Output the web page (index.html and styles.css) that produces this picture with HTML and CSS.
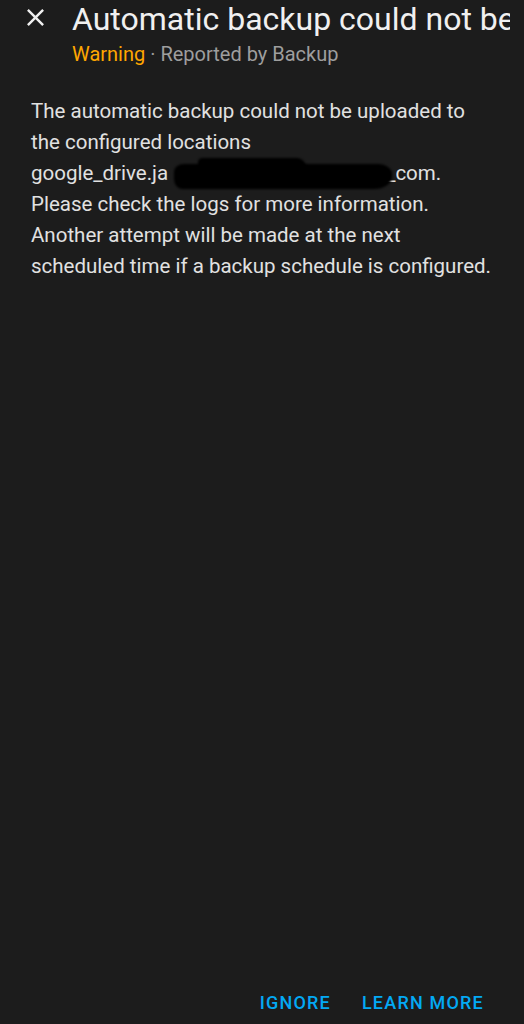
FILE: index.html
```html
<!DOCTYPE html>
<html>

<head>
    <meta http-equiv="Content-Type" content="text/html; charset=utf-8">
    <title>Repair - Automatic backup</title>
    <link rel="stylesheet" href="styles.css">
</head>

<body>
    <div class="dialog">
        <div class="header">
            <button class="close" aria-label="Close">
                <svg viewBox="0 0 24 24" width="29" height="29">
                    <path d="M19 6.41 17.59 5 12 10.59 6.41 5 5 6.41 10.59 12 5 17.59 6.41 19 12 13.41 17.59 19 19 17.59 13.41 12z" fill="currentColor"/>
                </svg>
            </button>
            <div class="heading">
                <h2 class="title">Automatic backup could not be uploaded to the configured locations</h2>
                <div class="subtitle"><span class="severity">Warning</span> · Reported by Backup</div>
            </div>
        </div>

        <div class="content">
            <p>
                The automatic backup could not be uploaded to the configured locations
                <span class="location">google_drive.ja<span class="redacted"><span class="scribble"></span><span class="scribble top"></span></span>_com.</span>
                Please check the logs for more information. Another attempt will be made at the next scheduled time if a backup schedule is configured.
            </p>
        </div>

        <div class="actions">
            <button class="action">Ignore</button>
            <button class="action">Learn more</button>
        </div>
    </div>
</body>
</html>
```

FILE: styles.css
```css
body {
    margin: 0;
    background: #1c1c1c;
    color: #e1e1e1;
    font-family: Roboto, "Noto Sans", sans-serif;
}

.dialog {
    display: flex;
    flex-direction: column;
    min-height: 100vh;
}

.header {
    display: flex;
    align-items: flex-start;
    padding: 0 14px 0 21px;
}

.close {
    flex: none;
    width: 29px;
    height: 29px;
    margin-top: 3px;
    padding: 0;
    border: none;
    background: none;
    color: #f0f0f0;
}

.close svg {
    display: block;
}

.heading {
    flex: 1;
    min-width: 0;
    margin-left: 22px;
}

.title {
    margin: 0;
    font-size: 32px;
    font-weight: 400;
    line-height: 38px;
    color: #f0f0f0;
    white-space: nowrap;
    overflow: hidden;
}

.subtitle {
    margin-top: 3px;
    font-size: 20px;
    line-height: 26px;
    color: #9e9e9e;
}

.severity {
    color: #ffa600;
}

.content {
    padding: 0 30px 0 31px;
}

.content p {
    margin: 29px 0 0;
    font-size: 20.5px;
    line-height: 31px;
}

.location {
    white-space: nowrap;
}

.redacted {
    position: relative;
    display: inline-block;
    width: 218px;
    height: 1em;
}

.scribble {
    position: absolute;
    left: 6px;
    right: -6px;
    top: 4px;
    bottom: -9px;
    background: #000;
    border-radius: 10px 14px 18px 8px / 8px 10px 12px 10px;
    filter: blur(0.8px);
}

.scribble.top {
    left: 30px;
    right: 80px;
    top: -2px;
    bottom: 10px;
    border-radius: 6px 12px 4px 4px;
}

.actions {
    margin-top: auto;
    display: flex;
    justify-content: flex-end;
    gap: 15px;
    padding-right: 32px;
}

.action {
    padding: 0 8px;
    height: 44px;
    border: none;
    background: none;
    color: #03a9f4;
    font-family: Roboto, "Noto Sans", sans-serif;
    font-size: 18px;
    font-weight: 500;
    letter-spacing: 1.2px;
    text-transform: uppercase;
}
```
